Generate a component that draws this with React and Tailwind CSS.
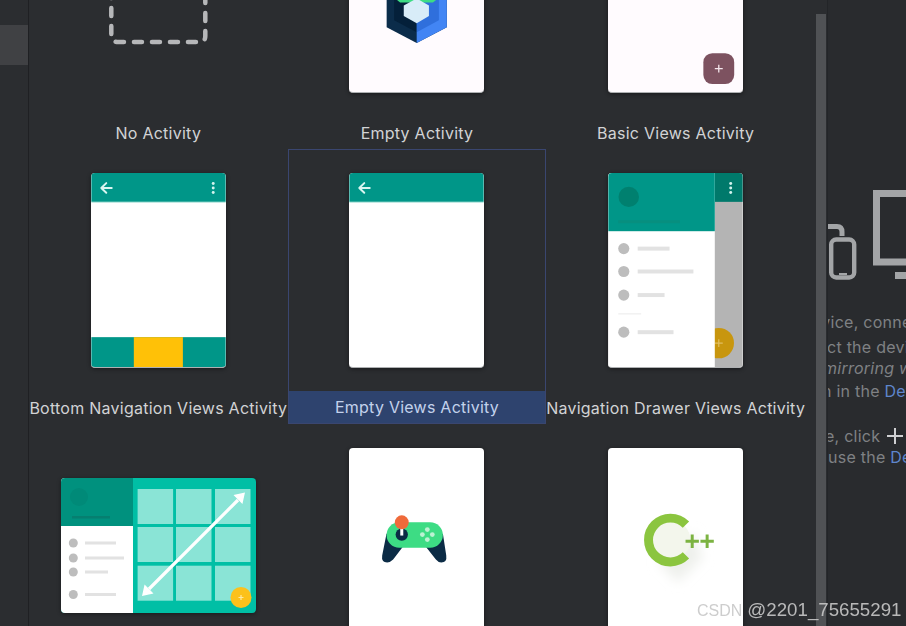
import React from "react";

const TEAL = "#009688";

function BackArrow() {
  return (
    <path d="M20.5 15H10.5M15 10.2L10 15L15 19.8" fill="none" stroke="#d9f6f1" strokeWidth="2" strokeLinecap="round" strokeLinejoin="round" />
  );
}
function Dots({ x = 122.5 }) {
  return (
    <g fill="#d3f3ee">
      <circle cx={x} cy="10.5" r="1.5" />
      <circle cx={x} cy="15" r="1.5" />
      <circle cx={x} cy="19.5" r="1.5" />
    </g>
  );
}
function Phone({ children, bg = "bg-white" }) {
  return (
    <div className={`w-[135px] h-[195px] rounded-[4px] overflow-hidden border-b border-[#aeb0b2] shadow-[0_1px_4px_rgba(0,0,0,0.45)] ${bg}`}>
      <svg viewBox="0 0 135 195" className="w-full h-full block">{children}</svg>
    </div>
  );
}

function NoActivity() {
  return (
    <div className="w-[135px] h-[195px]">
      <svg viewBox="0 0 135 195" className="w-full h-full block overflow-visible">
        <path d="M20.3 20V138Q20.3 144 27 144H109Q114.3 144 114.3 138V20" fill="none" stroke="#b6b7b9" strokeWidth="4.5" strokeLinecap="round" strokeDasharray="8 10" />
      </svg>
    </div>
  );
}

function EmptyCompose() {
  return (
    <Phone bg="bg-[#fffbfe]">
      <polygon points="37.5,94 67.7,78 98,94 98,130 67.7,145.7 37.5,130" fill="#0b2c4a" />
      <polygon points="67.7,145.7 98,130 98,94 67.7,110" fill="#4285f4" />
      <polygon points="45,98 67.7,86 67.7,135 45,123" fill="#04203a" />
      <polygon points="67.7,135 90,123 90,98 67.7,86" fill="#2f6fdc" />
      <polygon points="37.5,94 67.7,78 98,94 84,105 51,105" fill="#3ddc84" />
      <polygon points="54.7,108 67.7,101 80,108 80,118.7 67.7,126 54.7,118.7" fill="#d8ecf8" />
    </Phone>
  );
}

function BasicViews() {
  return (
    <Phone bg="bg-[#fffbfe]">
      <rect x="95.5" y="156" width="31" height="31" rx="9" fill="#7d5260" />
      <path d="M111 167.5v8M107 171.5h8" stroke="#f4e6ec" strokeWidth="1.3" />
    </Phone>
  );
}

function BottomNav() {
  return (
    <Phone>
      <rect width="135" height="29" fill={TEAL} />
      <rect y="29" width="135" height="1" fill="#b8e6df" />
      <BackArrow />
      <Dots />
      <rect y="165" width="135" height="30" fill={TEAL} />
      <rect x="42.7" y="165" width="49.3" height="30" fill="#ffc107" />
    </Phone>
  );
}

function EmptyViews() {
  return (
    <Phone>
      <rect width="135" height="29" fill={TEAL} />
      <rect y="29" width="135" height="1" fill="#b8e6df" />
      <BackArrow />
    </Phone>
  );
}

function NavDrawer() {
  return (
    <Phone>
      <rect width="135" height="195" fill="#b4b4b4" />
      <rect x="107" width="28" height="29" fill="#00796b" />
      <Dots x="123" />
      <circle cx="111" cy="171" r="15.3" fill="#c8960e" />
      <path d="M111 167v8M107 171h8" stroke="#e0bd60" strokeWidth="1.2" />
      <rect width="107" height="195" fill="#ffffff" />
      <rect width="107" height="58.5" fill={TEAL} />
      <circle cx="20.5" cy="24" r="10.3" fill="#00806f" />
      <rect x="10" y="47.5" width="62" height="3" fill="#078f7f" />
      {[[76, 32], [99, 56], [122.7, 27], [160, 36]].map(([y, w]) => (
        <g key={y}>
          <circle cx="15.5" cy={y} r="5.6" fill="#bdbdbd" />
          <rect x="29.5" y={y - 2} width={w} height="4" fill="#e2e2e2" />
        </g>
      ))}
      <rect x="10" y="141" width="23" height="1.2" fill="#eeeeee" />
    </Phone>
  );
}

function Tablet() {
  const xs = [76.6, 115, 154];
  const ys = [11, 49, 87.7];
  return (
    <div className="w-[195px] h-[135px] rounded-[4px] overflow-hidden shadow-[0_1px_4px_rgba(0,0,0,0.4)]">
      <svg viewBox="0 0 195 135" className="w-full h-full block">
        <rect width="195" height="135" fill="#00bfa5" />
        {ys.map((y) => xs.map((x) => <rect key={`${x}-${y}`} x={x} y={y} width="35.5" height="35" fill="#8ae4d6" />))}
        <rect width="72" height="135" fill="#ffffff" />
        <rect width="72" height="48" fill="#00917e" />
        <circle cx="18" cy="19" r="9" fill="#008a78" />
        <rect x="11" y="38" width="38" height="2.5" fill="#067f70" />
        {[[65, 31], [80, 39], [94, 23], [116.5, 31]].map(([y, w]) => (
          <g key={y}>
            <circle cx="12.3" cy={y} r="4.5" fill="#bdbdbd" />
            <rect x="24" y={y - 1.5} width={w} height="3" fill="#e2e2e2" />
          </g>
        ))}
        <path d="M88 111L177 22" stroke="#ffffff" strokeWidth="3.2" />
        <polygon points="183,15.5 174,17.5 181,24.5" fill="#ffffff" stroke="#ffffff" strokeWidth="1.5" />
        <polygon points="82,117 91,115 84,108" fill="#ffffff" stroke="#ffffff" strokeWidth="1.5" />
        <circle cx="180" cy="119.5" r="10.5" fill="#fcc11b" />
        <path d="M180 117v5M177.5 119.5h5" stroke="#ffe9a0" strokeWidth="1.2" />
      </svg>
    </div>
  );
}

function Game() {
  return (
    <Phone>
      <path d="M37.4 86L33 108Q32 115 38 115Q41 115 44 112L54 99ZM94 86L97.4 108Q98.4 115 92.4 115Q89.4 115 87 112L76.7 99Z" fill="#0b2b45" />
      <rect x="37.4" y="74.7" width="56.6" height="25.6" rx="12.8" fill="#3ddc84" />
      <circle cx="52.7" cy="87" r="6.2" fill="#0b2b45" />
      <rect x="51.2" y="76" width="3" height="12" fill="#ffffff" />
      <circle cx="52.7" cy="74.7" r="7" fill="#ef6a3a" />
      <g fill="#bdf2d3">
        <circle cx="78.4" cy="82" r="2.4" />
        <circle cx="78.4" cy="92" r="2.4" />
        <circle cx="73.4" cy="87" r="2.4" />
        <circle cx="83.4" cy="87" r="2.4" />
      </g>
    </Phone>
  );
}

function Cpp() {
  return (
    <Phone>
      <defs>
        <filter id="cppsoft" x="-50%" y="-50%" width="200%" height="200%">
          <feGaussianBlur stdDeviation="6" />
        </filter>
      </defs>
      <path d="M50 115L85 85L95 110L70 135Z" fill="#eef0ec" filter="url(#cppsoft)" />
      <circle cx="62.5" cy="92.5" r="20" fill="#f3f6ec" />
      <path d="M78 77A22 22 0 1 0 78 108" fill="none" stroke="#8bc53f" strokeWidth="9" />
      <path d="M84.3 87v13.4M77.6 93.7h13.4M99.3 87v13.4M92.6 93.7h13.4" stroke="#7cb342" strokeWidth="3" />
    </Phone>
  );
}

const cells = [
  { id: "none", label: "No Activity", art: <NoActivity /> },
  { id: "compose", label: "Empty Activity", art: <EmptyCompose /> },
  { id: "basic", label: "Basic Views Activity", art: <BasicViews /> },
  { id: "bottom", label: "Bottom Navigation Views Activity", art: <BottomNav /> },
  { id: "views", label: "Empty Views Activity", art: <EmptyViews />, selected: true },
  { id: "drawer", label: "Navigation Drawer Views Activity", art: <NavDrawer /> },
  { id: "tablet", art: <Tablet /> },
  { id: "game", art: <Game /> },
  { id: "cpp", art: <Cpp /> },
];

function Cell({ label, art, selected }) {
  return (
    <div className={`h-[275px] flex flex-col items-center border ${selected ? "border-[#3a4670]" : "border-transparent"}`}>
      <div className="mt-[23px] h-[195px] flex items-center justify-center">{art}</div>
      {label && (
        <div className={`mt-[23px] h-[32px] w-full flex items-center justify-center whitespace-nowrap text-[16px] tracking-[0.25px] ${selected ? "bg-[#2e436e] text-[#c3d2ec]" : "text-[#d2d3d5] pt-[2px]"}`}>
          {label}
        </div>
      )}
    </div>
  );
}

function Link({ children }) {
  return <span className="text-[#5f86cc]">{children}</span>;
}

export default function App() {
  return (
    <div className="relative w-[906px] h-[626px] overflow-hidden flex bg-[#2b2d30] font-['Inter',sans-serif]">
      <aside className="w-[29px] shrink-0 border-r border-[#1f2023] pt-[25px]">
        <div className="h-[40px] bg-[#404144]" />
      </aside>

      <main className="w-[776px] shrink-0 -mt-[126px]">
        <div className="grid grid-cols-[repeat(3,258.67px)]">
          {cells.map(({ id, ...c }) => (
            <Cell key={id} {...c} />
          ))}
        </div>
      </main>

      <div className="ml-[11px] mt-[14px] w-[10px] shrink-0 bg-[#505255]" />

      <section className="ml-[1px] flex-1 min-w-0 overflow-hidden bg-[#292b2e] border-l border-[#232528] text-[16px] tracking-[0.25px] text-[#7f8184] whitespace-nowrap">
        <svg viewBox="0 0 78 92" className="block w-[78px] h-[92px] mt-[189px]">
          <path d="M-2 37.5H9Q14 37.5 14 43V47" fill="none" stroke="#a3a5a7" strokeWidth="5" />
          <rect x="3.2" y="50.5" width="23" height="38" rx="5" fill="#292b2e" stroke="#a3a5a7" strokeWidth="4.4" />
          <rect x="11" y="84" width="8" height="2" fill="#a3a5a7" />
          <path d="M80 4.5H48.5V73H80" fill="none" stroke="#a3a5a7" strokeWidth="7" />
          <rect x="67" y="83" width="14" height="7" fill="#a3a5a7" />
        </svg>
        <div className="h-[20px] leading-[20px] mt-[31px] -ml-[26px]">device, connect</div>
        <div className="h-[20px] leading-[20px] mt-[5px] -ml-[1px]">ct the device</div>
        <div className="h-[20px] leading-[20px] mt-[1px] -ml-[5px] italic">mirroring with</div>
        <div className="h-[20px] leading-[20px] mt-[3px] -ml-[6px]">
          n in the <Link>Device</Link>
        </div>
        <div className="h-[20px] leading-[20px] mt-[25px] flex items-center -ml-[3px]">
          e, click
          <svg viewBox="0 0 16 16" className="ml-[7px] w-[16px] h-[16px] shrink-0">
            <path d="M8 0v16M0 8h16" stroke="#cfd0d2" strokeWidth="2" />
          </svg>
        </div>
        <div className="h-[20px] leading-[20px] mt-[1px]">
          use the <Link>Device</Link>
        </div>
      </section>

      <div className="absolute left-[697px] top-[599px] font-['Liberation_Sans',sans-serif] leading-[22px] text-[#c8c8c8] whitespace-nowrap opacity-90">
        <span className="text-[16px]">CSDN</span>
        <span className="text-[18.7px] ml-[5px]">@2201_75655291</span>
      </div>
    </div>
  );
}
